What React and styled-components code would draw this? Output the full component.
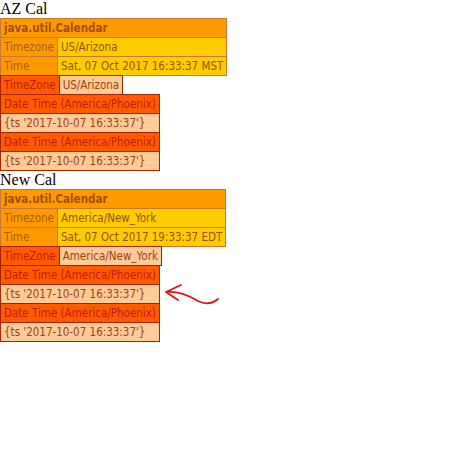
import * as React from "react";
import styled, {createGlobalStyle} from "styled-components";

const GlobalStyle = createGlobalStyle`
  body {
    margin: 0;
    background: #ffffff;
    font-family: "Liberation Serif", "Times New Roman", serif;
    font-size: 16px;
  }
`

const Page = styled.div`
  position: relative;
  width: 474px;
  height: 449px;
`

const Heading = styled.div`
  line-height: 18px;
  color: #000000;
`

const DumpTable = styled.table`
  border-collapse: collapse;
  font-family: "DejaVu Sans Condensed", "DejaVu Sans", Verdana, sans-serif;
  font-size: 11.5px;
  line-height: 14px;
  border: 1px solid ${({$tone}) => $tone === 'java' ? '#c9782e' : '#a32400'};
  & + & {
    margin-top: -1px;
  }
`

const Head = styled.th`
  text-align: left;
  font-weight: bold;
  padding: 2px 3px;
  background: #ff9900;
  color: #a24e0c;
  border: 1px solid #c9782e;
  white-space: nowrap;
`

const Key = styled.td`
  padding: 2px 3px;
  white-space: nowrap;
  background: ${({$tone}) => $tone === 'java' ? '#ff9900' : '#ff5a00'};
  color: ${({$tone}) => $tone === 'java' ? '#a85a12' : '#c21a00'};
  border: 1px solid ${({$tone}) => $tone === 'java' ? '#c9782e' : '#a32400'};
`

const Value = styled.td`
  padding: 2px 3px;
  white-space: nowrap;
  background: ${({$tone}) => $tone === 'java' ? '#ffcc00' : '#ffcc99'};
  color: ${({$tone}) => $tone === 'java' ? '#945010' : '#a04010'};
  border: 1px solid ${({$tone}) => $tone === 'java' ? '#c9782e' : '#a32400'};
`

const Arrow = styled.svg`
  position: absolute;
  left: 0;
  top: 0;
  pointer-events: none;
`

const CalendarDump = ({title, zone, time, stamp}) => (
    <>
        <Heading>{title}</Heading>
        <DumpTable $tone="java">
            <tbody>
            <tr><Head colSpan={2}>java.util.Calendar</Head></tr>
            <tr><Key $tone="java">Timezone</Key><Value $tone="java">{zone}</Value></tr>
            <tr><Key $tone="java">Time</Key><Value $tone="java">{time}</Value></tr>
            </tbody>
        </DumpTable>
        <DumpTable>
            <tbody>
            <tr><Key>TimeZone</Key><Value>{zone}</Value></tr>
            </tbody>
        </DumpTable>
        <DumpTable>
            <tbody>
            <tr><Key>Date Time (America/Phoenix)</Key></tr>
            <tr><Value>{stamp}</Value></tr>
            <tr><Key>Date Time (America/Phoenix)</Key></tr>
            <tr><Value>{stamp}</Value></tr>
            </tbody>
        </DumpTable>
    </>
)

export default function App() {
    return (
        <Page>
            <GlobalStyle/>
            <CalendarDump
                title="AZ Cal"
                zone="US/Arizona"
                time="Sat, 07 Oct 2017 16:33:37 MST"
                stamp="{ts '2017-10-07 16:33:37'}"
            />
            <CalendarDump
                title="New Cal"
                zone="America/New_York"
                time="Sat, 07 Oct 2017 19:33:37 EDT"
                stamp="{ts '2017-10-07 16:33:37'}"
            />
            <Arrow width="474" height="449">
                <path d="M167 292 C 178 291, 188 295, 198 301 C 206 305, 212 304, 218 299"
                      fill="none" stroke="#e0101a" strokeWidth="1.8" strokeLinecap="round"/>
                <path d="M181 285 L166 292 L178 300"
                      fill="none" stroke="#e0101a" strokeWidth="1.8" strokeLinecap="round" strokeLinejoin="round"/>
            </Arrow>
        </Page>
    )
}
